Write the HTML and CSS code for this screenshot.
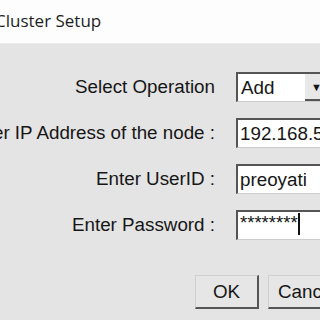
FILE: index.html
```html
<!DOCTYPE html>
<html>
<head>
<meta charset="utf-8">
<link rel="stylesheet" href="styles.css">
</head>
<body>
<div class="window">
  <div class="titlebar"><span class="title">Cluster Setup</span></div>
  <div class="content">
    <div class="form">
      <div class="row">
        <div class="label"><span>Select Operation</span></div>
        <div class="combo"><span class="value">Add</span><span class="arrow">&#9660;</span></div>
      </div>
      <div class="row">
        <div class="label"><span>Enter IP Address of the node :</span></div>
        <div class="field">192.168.56.101</div>
      </div>
      <div class="row">
        <div class="label"><span>Enter UserID :</span></div>
        <div class="field">preoyati</div>
      </div>
      <div class="row">
        <div class="label"><span>Enter Password :</span></div>
        <div class="field pw"><span class="stars">********</span><span class="caret"></span></div>
      </div>
    </div>
    <div class="buttons">
      <div class="btn">OK</div>
      <div class="btn">Cancel</div>
    </div>
  </div>
</div>
</body>
</html>
```

FILE: styles.css
```css
html, body {
  margin: 0;
  padding: 0;
  width: 320px;
  height: 320px;
  overflow: hidden;
  background: #e5e5e5;
}
.window {
  width: 320px;
  height: 320px;
  display: flex;
  flex-direction: column;
  font-family: "Liberation Sans", Arial, sans-serif;
  color: #161616;
}
.titlebar {
  height: 43px;
  background: #fdfdfd;
  border-bottom: 1px solid #ececec;
  display: flex;
  align-items: center;
  overflow: hidden;
}
.title {
  font-family: "Open Sans", "Noto Sans", sans-serif;
  font-size: 17px;
  font-weight: 500;
  color: #1e1e1e;
  margin-left: -5px;
  margin-top: -3px;
  white-space: nowrap;
}
.content {
  flex: 1;
  background: #e4e4e4;
  display: flex;
  flex-direction: column;
  overflow: hidden;
}
.form {
  display: flex;
  flex-direction: column;
  gap: 16px;
  margin-top: 28px;
}
.row {
  display: flex;
  align-items: center;
  height: 30px;
}
.label {
  width: 215px;
  flex: none;
  display: flex;
  justify-content: flex-end;
  white-space: nowrap;
  overflow: hidden;
  font-size: 18.8px;
}
.label span {
  flex: none;
}
.combo, .field {
  flex: none;
  margin-left: 21px;
  width: 100px;
  height: 30px;
  box-sizing: border-box;
  background: #fff;
  border-top: 2px solid #555;
  border-left: 2px solid #555;
  border-right: 1px solid #ccc;
  border-bottom: 1px solid #ccc;
  display: flex;
  align-items: center;
  font-size: 18.8px;
  padding-left: 2px;
  white-space: nowrap;
  overflow: hidden;
}
.combo {
  padding-left: 3px;
}
.combo .value {
  width: 64px;
  flex: none;
}
.combo .arrow {
  flex: none;
  width: 20px;
  height: 100%;
  background: #e8e8e8;
  border-bottom: 2px solid #555;
  box-sizing: border-box;
  font-size: 11px;
  display: flex;
  align-items: center;
  padding-left: 6px;
}
.field.pw {
  align-items: flex-start;
}
.pw .stars {
  font-size: 18.5px;
  line-height: 18px;
  margin-top: 2px;
}
.caret {
  width: 2px;
  height: 22px;
  background: #111;
  margin-left: 0px;
  margin-top: 1px;
}
.buttons {
  display: flex;
  gap: 9px;
  margin-top: 35px;
  margin-left: 195px;
}
.btn {
  flex: none;
  width: 64px;
  height: 34px;
  box-sizing: border-box;
  background: #e6e6e6;
  border-top: 1px solid #cfcfcf;
  border-left: 1px solid #cfcfcf;
  border-right: 2px solid #555;
  border-bottom: 2px solid #555;
  display: flex;
  align-items: center;
  justify-content: center;
  font-size: 18.8px;
  white-space: nowrap;
  overflow: hidden;
}
.btn + .btn {
  width: 80px;
  justify-content: flex-start;
  padding-left: 9px;
}
```
